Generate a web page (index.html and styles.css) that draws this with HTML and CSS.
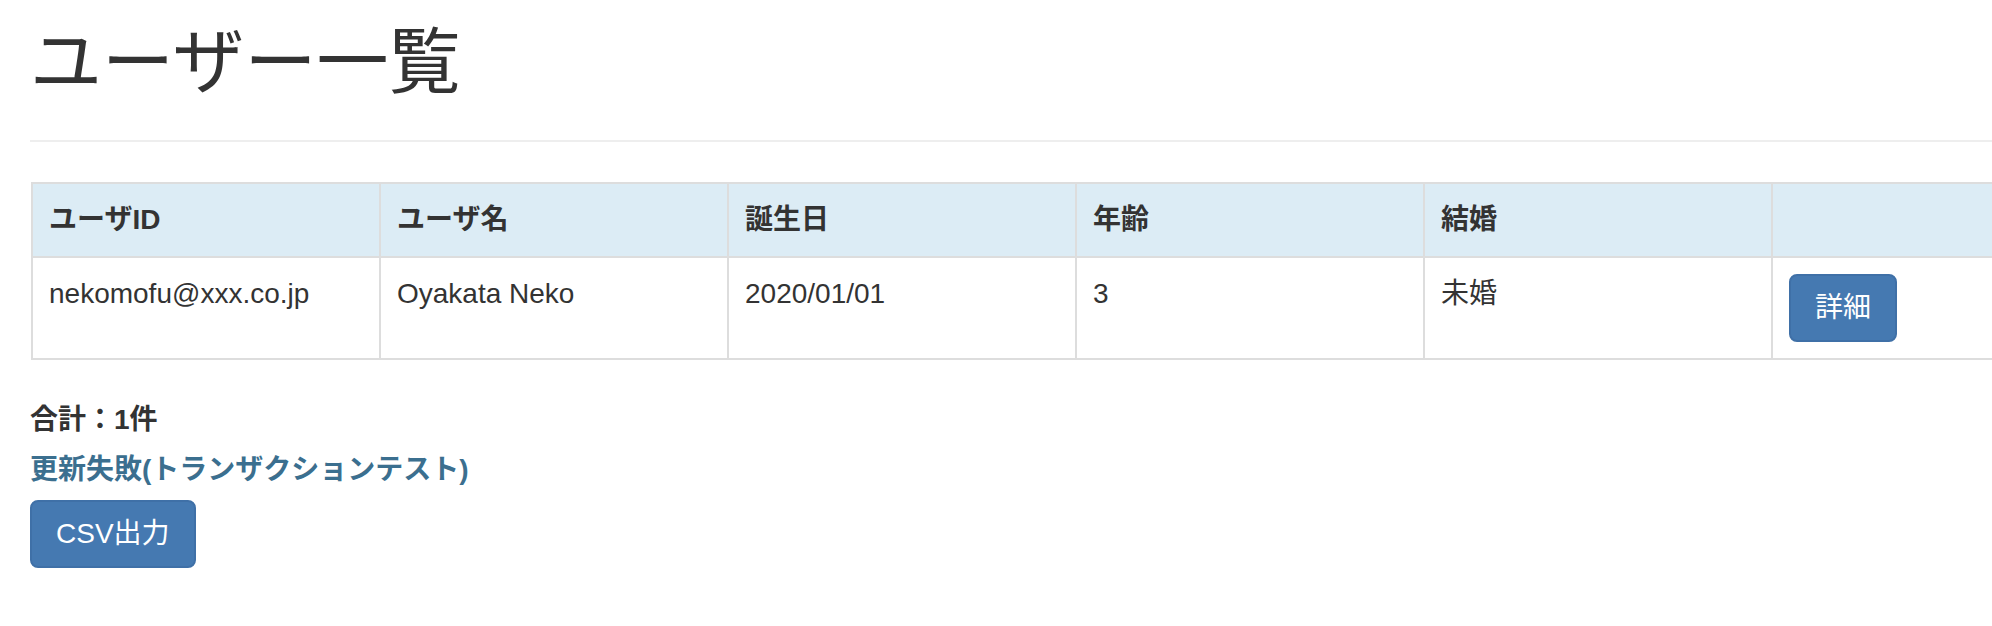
FILE: index.html
```html
<!DOCTYPE html>
<html lang="ja">
<head>
<meta charset="utf-8">
<title>ユーザー一覧</title>
<link rel="stylesheet" href="styles.css">
</head>
<body>
<div class="container">
  <div class="page-header">
    <h1>ユーザー一覧</h1>
  </div>
  <div class="table-wrap">
    <table class="table">
      <thead>
        <tr class="info">
          <th>ユーザID</th>
          <th>ユーザ名</th>
          <th>誕生日</th>
          <th>年齢</th>
          <th>結婚</th>
          <th></th>
        </tr>
      </thead>
      <tbody>
        <tr>
          <td>nekomofu@xxx.co.jp</td>
          <td>Oyakata Neko</td>
          <td>2020/01/01</td>
          <td>3</td>
          <td>未婚</td>
          <td><button class="btn">詳細</button></td>
        </tr>
      </tbody>
    </table>
  </div>
  <p class="total">合計：1件</p>
  <p class="link-row"><a class="link" href="#">更新失敗(トランザクションテスト)</a></p>
  <button class="btn">CSV出力</button>
</div>
</body>
</html>
```

FILE: styles.css
```css
html, body {
  margin: 0;
  padding: 0;
  overflow: hidden;
  background: #fff;
}
body {
  font-family: "Liberation Sans", "Noto Sans CJK JP", sans-serif;
  font-size: 28px;
  line-height: 40px;
  color: #333;
}
.container {
  padding: 0 30px;
}
.page-header {
  margin: 0 -30px 40px 0;
  padding-bottom: 18px;
  border-bottom: 2px solid #eee;
}
.page-header h1 {
  margin: 23px 0 20px;
  font-size: 72px;
  line-height: 79px;
  font-weight: 400;
  color: #333;
}
.table-wrap {
  margin: 0 -30px 40px 0;
  overflow: hidden;
}
.table {
  width: 2090px;
  margin: 0 0 0 1px;
  border-collapse: collapse;
  table-layout: fixed;
}
.table th,
.table td {
  border: 2px solid #ddd;
  padding: 16px;
  text-align: left;
  vertical-align: top;
  line-height: 40px;
  white-space: nowrap;
}
.table th {
  font-weight: 700;
  vertical-align: bottom;
}
.table tr.info th {
  background: #dcecf5;
}
.total {
  margin: 0 0 10px;
  font-weight: 700;
}
.link-row {
  margin: 0 0 10px;
}
.link {
  color: #3b6f8f;
  font-weight: 700;
  text-decoration: none;
}
.btn {
  display: inline-block;
  margin: 0;
  padding: 12px 24px;
  font-family: "Liberation Sans", "Noto Sans CJK JP", sans-serif;
  font-size: 28px;
  line-height: 40px;
  color: #fff;
  background: #4579b1;
  border: 2px solid #3f70a7;
  border-radius: 8px;
  cursor: pointer;
  vertical-align: middle;
}
```
